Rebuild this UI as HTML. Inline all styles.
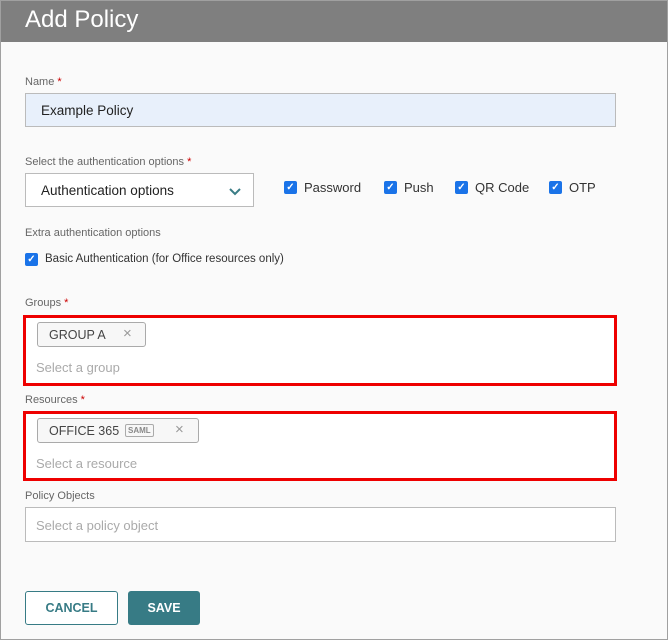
<!DOCTYPE html><html><head><style>
*{box-sizing:border-box;margin:0;padding:0}
body{width:668px;height:640px;overflow:hidden;background:#fafafa;font-family:"Liberation Sans",sans-serif;position:relative}
.a{position:absolute}
.fr{left:0;top:0;width:668px;height:640px;border:1px solid #a0a0a0;pointer-events:none}
.hd{left:0;top:0;width:668px;height:42px;background:#7f7f7f;color:#fff;font-size:24px;padding:6px 0 0 25px}
.lb{font-size:11px;color:#666}
.lb b{color:#c00;font-weight:normal}
.in{background:#fff;border:1px solid #bbb}
.cb{width:13px;height:13px;background:#1a73e8;border-radius:2px;color:#fff;font-size:10px;line-height:13px;text-align:center;font-weight:bold}
.t{font-size:13px;color:#333}
.red{border:3px solid #e00;background:#fff}
.chip{border:1px solid #aaa;border-radius:3px;background:#f7f7f7;font-size:12.5px;color:#444}
.ph{font-size:13px;color:#aaa}
</style></head><body>
<div class="a hd">Add Policy</div>
<div class="a lb" style="left:25px;top:76px">Name <b>*</b></div>
<div class="a" style="left:25px;top:93px;width:591px;height:34px;background:#e8f0fb;border:1px solid #bbb;font-size:13.5px;color:#222;padding:9px 15px">Example Policy</div>
<div class="a lb" style="left:25px;top:156px">Select the authentication options <b>*</b></div>
<div class="a in" style="left:25px;top:173px;width:229px;height:34px;font-size:13.5px;color:#222;padding:9px 15px">Authentication options
<svg class="a" style="left:203px;top:14px" width="12" height="8"><path d="M1 1l5 5 5-5" stroke="#3a7d86" stroke-width="2" fill="none"/></svg></div>
<div class="a cb" style="left:284px;top:181px">✓</div><div class="a t" style="left:304px;top:180px">Password</div>
<div class="a cb" style="left:384px;top:181px">✓</div><div class="a t" style="left:404px;top:180px">Push</div>
<div class="a cb" style="left:455px;top:181px">✓</div><div class="a t" style="left:475px;top:180px">QR Code</div>
<div class="a cb" style="left:549px;top:181px">✓</div><div class="a t" style="left:569px;top:180px">OTP</div>
<div class="a lb" style="left:25px;top:227px">Extra authentication options</div>
<div class="a cb" style="left:25px;top:253px">✓</div><div class="a" style="left:45px;top:253px;font-size:11.5px;color:#333">Basic Authentication (for Office resources only)</div>
<div class="a lb" style="left:25px;top:297px">Groups <b>*</b></div>
<div class="a red" style="left:23px;top:315px;width:594px;height:71px"></div>
<div class="a chip" style="left:37px;top:322px;width:109px;height:25px;padding:5px 11px">GROUP A<span class="a" style="left:85px;top:2px;color:#999;font-size:15px">×</span></div>
<div class="a ph" style="left:36px;top:360px">Select a group</div>
<div class="a lb" style="left:25px;top:394px">Resources <b>*</b></div>
<div class="a red" style="left:23px;top:411px;width:594px;height:70px"></div>
<div class="a chip" style="left:37px;top:418px;width:162px;height:25px;padding:5px 11px">OFFICE 365<span class="a" style="left:87px;top:5px;border:1px solid #aaa;border-radius:2px;font-size:8px;font-weight:bold;color:#888;padding:1px 2px">SAML</span><span class="a" style="left:137px;top:2px;color:#999;font-size:15px">×</span></div>
<div class="a ph" style="left:36px;top:456px">Select a resource</div>
<div class="a lb" style="left:25px;top:490px">Policy Objects</div>
<div class="a in" style="left:25px;top:507px;width:591px;height:35px;padding:9px 10px"><span class="ph">Select a policy object</span></div>
<div class="a" style="left:25px;top:591px;width:93px;height:34px;border:1px solid #377b85;border-radius:3px;background:#fff;color:#377b85;font-weight:bold;font-size:12.5px;text-align:center;line-height:32px">CANCEL</div>
<div class="a" style="left:128px;top:591px;width:72px;height:34px;border-radius:3px;background:#377b85;color:#fff;font-weight:bold;font-size:12.5px;text-align:center;line-height:34px">SAVE</div>
<div class="a fr"></div>
</body></html>
